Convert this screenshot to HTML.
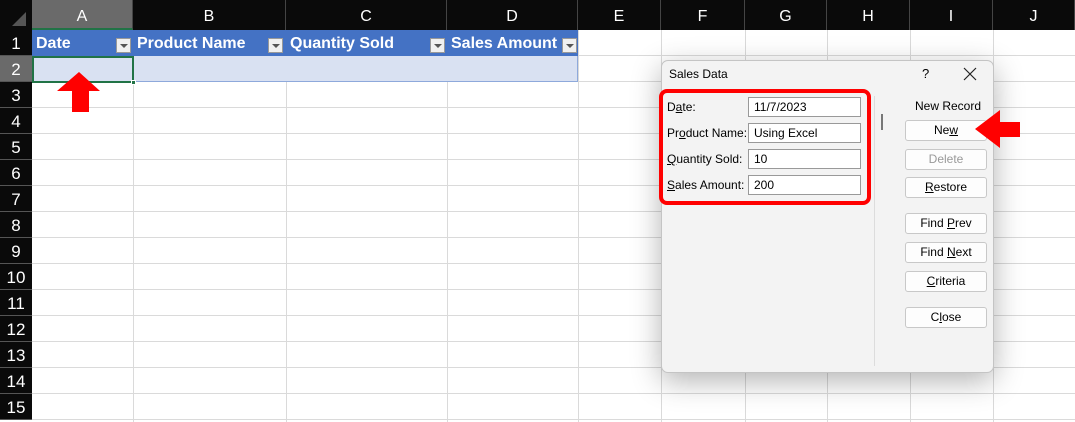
<!DOCTYPE html>
<html><head><meta charset="utf-8"><style>
*{margin:0;padding:0;box-sizing:border-box}
body{width:1075px;height:422px;overflow:hidden;background:#fff;font-family:"Liberation Sans",sans-serif;position:relative}
.abs{position:absolute}
.ch{position:absolute;top:0;height:30px;background:#0a0a0a;color:#fff;font-size:16px;text-align:center;line-height:34px;border-right:1px solid #444}
.rh{position:absolute;left:0;width:32px;height:26px;background:#0a0a0a;color:#fff;font-size:17px;text-align:center;line-height:27px;border-bottom:1px solid #555}
.hl{position:absolute;left:32px;right:0;height:1px;background:#dadada}
.vl{position:absolute;top:30px;bottom:0;width:1px;background:#dadada}
.th{position:absolute;top:30px;height:26px;color:#fff;font-weight:bold;font-size:16px;line-height:28px;padding-left:4px}
.dd{position:absolute;top:38px;width:15px;height:15px;background:#f0f0f0;border:1px solid #999}
.dd:after{content:"";position:absolute;left:3px;top:5px;border-left:4px solid transparent;border-right:4px solid transparent;border-top:4px solid #555}
.lab{position:absolute;left:667px;color:#000;font-size:12px}
.inp{position:absolute;left:748px;width:113px;height:20px;background:#fff;border:1px solid #999;font-size:12px;padding-left:5px;line-height:18px}
.btn{position:absolute;left:905px;width:82px;height:21px;background:#fdfdfd;border:1px solid #c8c8c8;border-radius:3px;font-size:12px;text-align:center;line-height:19px;color:#000}
</style></head><body>
<div class="abs" style="left:0;top:0;width:32px;height:30px;background:#0a0a0a"></div>
<div class="abs" style="left:12px;top:12px;width:0;height:0;border-left:14px solid transparent;border-bottom:14px solid #555"></div>
<div class="ch" style="left:32px;width:101px;background:#6a6a6a;border-bottom:2px solid #217346">A</div>
<div class="ch" style="left:133px;width:153px">B</div>
<div class="ch" style="left:286px;width:161px">C</div>
<div class="ch" style="left:447px;width:131px">D</div>
<div class="ch" style="left:578px;width:83px">E</div>
<div class="ch" style="left:661px;width:84px">F</div>
<div class="ch" style="left:745px;width:82px">G</div>
<div class="ch" style="left:827px;width:83px">H</div>
<div class="ch" style="left:910px;width:83px">I</div>
<div class="ch" style="left:993px;width:82px">J</div>
<div class="rh" style="top:30px">1</div>
<div class="rh" style="top:56px;background:#6a6a6a">2</div>
<div class="rh" style="top:82px">3</div>
<div class="rh" style="top:108px">4</div>
<div class="rh" style="top:134px">5</div>
<div class="rh" style="top:160px">6</div>
<div class="rh" style="top:186px">7</div>
<div class="rh" style="top:212px">8</div>
<div class="rh" style="top:238px">9</div>
<div class="rh" style="top:264px">10</div>
<div class="rh" style="top:290px">11</div>
<div class="rh" style="top:316px">12</div>
<div class="rh" style="top:342px">13</div>
<div class="rh" style="top:368px">14</div>
<div class="rh" style="top:394px">15</div>
<div class="hl" style="top:55px"></div><div class="hl" style="top:81px"></div><div class="hl" style="top:107px"></div><div class="hl" style="top:133px"></div><div class="hl" style="top:159px"></div><div class="hl" style="top:185px"></div><div class="hl" style="top:211px"></div><div class="hl" style="top:237px"></div><div class="hl" style="top:263px"></div><div class="hl" style="top:289px"></div><div class="hl" style="top:315px"></div><div class="hl" style="top:341px"></div><div class="hl" style="top:367px"></div><div class="hl" style="top:393px"></div><div class="hl" style="top:419px"></div>
<div class="vl" style="left:133px"></div><div class="vl" style="left:286px"></div><div class="vl" style="left:447px"></div><div class="vl" style="left:578px"></div><div class="vl" style="left:661px"></div><div class="vl" style="left:745px"></div><div class="vl" style="left:827px"></div><div class="vl" style="left:910px"></div><div class="vl" style="left:993px"></div>
<div class="abs" style="left:32px;top:30px;width:546px;height:26px;background:#4472c4"></div>
<div class="abs" style="left:32px;top:56px;width:546px;height:26px;background:#d9e1f2;border-bottom:1px solid #8ea9db;border-right:1px solid #8ea9db"></div>
<div class="th" style="left:32px">Date</div>
<div class="th" style="left:133px">Product Name</div>
<div class="th" style="left:286px">Quantity Sold</div>
<div class="th" style="left:447px">Sales Amount</div>
<div class="dd" style="left:116px"></div><div class="dd" style="left:268px"></div><div class="dd" style="left:430px"></div><div class="dd" style="left:562px"></div>
<div class="abs" style="left:32px;top:56px;width:102px;height:27px;border:2px solid #217346"></div>
<div class="abs" style="left:131px;top:80px;width:5px;height:5px;background:#217346;border:1px solid #fff"></div>
<svg class="abs" style="left:55px;top:72px" width="48" height="44"><path d="M24 0 L45 19 L34 19 L34 40 L17 40 L17 19 L2 19 Z" fill="#f00"/></svg>
<div class="abs" style="left:661px;top:60px;width:333px;height:313px;background:#f3f3f3;border:1px solid #c4c4c4;border-radius:7px;box-shadow:0 8px 30px rgba(0,0,0,0.3)"></div>
<div class="abs" style="left:669px;top:67px;font-size:12px">Sales Data</div>
<div class="abs" style="left:922px;top:66px;font-size:13px">?</div>
<svg class="abs" style="left:963px;top:67px" width="14" height="14"><path d="M1 1 L13 13 M13 1 L1 13" stroke="#222" stroke-width="1.2"/></svg>
<div class="abs" style="left:874px;top:96px;width:1px;height:270px;background:#dcdcdc"></div>
<div class="abs" style="left:881px;top:114px;width:2px;height:16px;background:#777"></div>
<div class="lab" style="top:100px">D<u>a</u>te:</div>
<div class="lab" style="top:126px">Pr<u>o</u>duct Name:</div>
<div class="lab" style="top:152px"><u>Q</u>uantity Sold:</div>
<div class="lab" style="top:178px"><u>S</u>ales Amount:</div>
<div class="inp" style="top:97px">11/7/2023</div>
<div class="inp" style="top:123px">Using Excel</div>
<div class="inp" style="top:149px">10</div>
<div class="inp" style="top:175px">200</div>
<div class="abs" style="left:659px;top:89px;width:212px;height:116px;border:4px solid #f00;border-radius:8px"></div>
<div class="abs" style="left:915px;top:99px;font-size:12px">New Record</div>
<div class="btn" style="top:120px">Ne<u>w</u></div>
<div class="btn" style="top:149px;color:#999">Delete</div>
<div class="btn" style="top:177px"><u>R</u>estore</div>
<div class="btn" style="top:213px">Find <u>P</u>rev</div>
<div class="btn" style="top:242px">Find <u>N</u>ext</div>
<div class="btn" style="top:271px"><u>C</u>riteria</div>
<div class="btn" style="top:307px">C<u>l</u>ose</div>
<svg class="abs" style="left:973px;top:108px" width="50" height="42"><path d="M2 21 L27 2 L27 14 L47 14 L47 29 L27 29 L27 40 Z" fill="#f00"/></svg>
</body></html>
